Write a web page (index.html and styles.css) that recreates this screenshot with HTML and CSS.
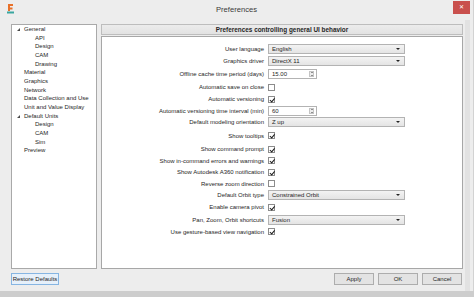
FILE: index.html
```html
<!DOCTYPE html>
<html lang="en">
<head>
  <meta charset="UTF-8" />
  <meta name="viewport" content="width=device-width, initial-scale=1.0"/>
  <title>Preferences</title>
  <link rel="stylesheet" href="styles.css">
</head>
<body>
  <div class="window">
    <div class="titlebar">
      <svg class="app-icon" width="9" height="11" viewBox="0 0 9 11">
        <path d="M2 1 H7 V3 H4 V4.5 H6.5 V6.5 H4 V8 H2 Z" fill="#e8712a"/>
        <path d="M1 8.5 H8 V10.5 H1 Z" fill="#3aa6a0"/>
      </svg>
      <span class="title">Preferences</span>
      <span class="close">&#x2715;</span>
    </div>

    <div class="client">
      <div class="main">
        <ul class="tree">
          <li class="open"><span class="arrow"></span>General</li>
          <li class="child">API</li>
          <li class="child">Design</li>
          <li class="child">CAM</li>
          <li class="child">Drawing</li>
          <li>Material</li>
          <li>Graphics</li>
          <li>Network</li>
          <li>Data Collection and Use</li>
          <li>Unit and Value Display</li>
          <li class="open"><span class="arrow"></span>Default Units</li>
          <li class="child">Design</li>
          <li class="child">CAM</li>
          <li class="child">Sim</li>
          <li>Preview</li>
        </ul>

        <div class="page">
          <div class="page-head">Preferences controlling general UI behavior</div>
          <div class="page-body">
            <div class="form">
              <label>User language</label>
              <span class="combo">English</span>

              <label>Graphics driver</label>
              <span class="combo">DirectX 11</span>

              <label>Offline cache time period (days)</label>
              <span class="spin">15.00<span class="spin-btn"></span></span>

              <label>Automatic save on close</label>
              <span class="check"></span>

              <label>Automatic versioning</label>
              <span class="check on"></span>

              <label>Automatic versioning time interval (min)</label>
              <span class="spin">60<span class="spin-btn"></span></span>

              <label>Default modeling orientation</label>
              <span class="combo">Z up</span>

              <label>Show tooltips</label>
              <span class="check on"></span>

              <label>Show command prompt</label>
              <span class="check on"></span>

              <label>Show in-command errors and warnings</label>
              <span class="check on"></span>

              <label>Show Autodesk A360 notification</label>
              <span class="check on"></span>

              <label>Reverse zoom direction</label>
              <span class="check"></span>

              <label>Default Orbit type</label>
              <span class="combo">Constrained Orbit</span>

              <label>Enable camera pivot</label>
              <span class="check on"></span>

              <label>Pan, Zoom, Orbit shortcuts</label>
              <span class="combo">Fusion</span>

              <label>Use gesture-based view navigation</label>
              <span class="check on"></span>
            </div>
          </div>
        </div>
      </div>

      <div class="footer">
        <button class="restore">Restore Defaults</button>
        <div class="actions">
          <button>Apply</button>
          <button>OK</button>
          <button>Cancel</button>
        </div>
      </div>
    </div>
  </div>
</body>
</html>
```

FILE: styles.css
```css
html, body {
  margin: 0;
  padding: 0;
  height: 100%;
  background-color: #cdcdcd;
  font-family: "Liberation Sans", Arial, sans-serif;
  font-size: 6px;
  color: #262626;
  overflow: hidden;
}

.window {
  width: 474px;
  height: 291px;
  box-sizing: border-box;
  background-color: #ededed;
  border-right: 1px solid #d2d2d2;
}

.titlebar {
  position: relative;
  height: 20px;
  display: flex;
  align-items: center;
  justify-content: center;
}

.app-icon {
  position: absolute;
  left: 6px;
  top: 3px;
}

.title {
  font-size: 7.6px;
  color: #3a3a3a;
  margin-top: -2px;
}

.close {
  position: absolute;
  right: 3px;
  top: 1px;
  width: 17px;
  height: 13px;
  background-color: #c9504d;
  color: white;
  font-size: 6px;
  line-height: 13px;
  text-align: center;
}

.client {
  padding: 4px 10px 0 11px;
  background: linear-gradient(to left, #ededed 3px, #e2e2e2 3px, #e2e2e2 8px, #ededed 8px);
}

.main {
  display: flex;
  gap: 4px;
  height: 245px;
}

.tree {
  list-style: none;
  margin: 0;
  padding: 0;
  width: 86px;
  box-sizing: border-box;
  background-color: white;
  border: 1px solid #a9a9a9;
}

.tree li {
  line-height: 8.67px;
  height: 8.67px;
  padding-left: 12px;
  white-space: nowrap;
}

.tree li.child {
  padding-left: 23px;
}

.tree li.open {
  position: relative;
}

.arrow {
  position: absolute;
  left: 5px;
  top: 3px;
  width: 0;
  height: 0;
  border-left: 3px solid transparent;
  border-bottom: 3px solid #4a4a4a;
}

.page {
  flex: 1;
  display: flex;
  flex-direction: column;
}

.page-head {
  height: 9px;
  line-height: 9px;
  border: 1px solid #bdbdbd;
  background: linear-gradient(#ececec, #e2e2e2);
  text-align: center;
  font-size: 6.4px;
  font-weight: bold;
  margin-bottom: 1px;
}

.page-body {
  flex: 1;
  background-color: white;
  border: 1px solid #a7a7a7;
  padding-top: 6px;
}

.form {
  display: grid;
  grid-template-columns: 162px 1fr;
  grid-template-rows: 12px 12px 14px 12px 12px 11px 12px 15px 12px 11px 12px 11px 12px 12px 13px 11px;
  column-gap: 4px;
}

.form label {
  text-align: right;
  align-self: center;
  white-space: nowrap;
}

.combo {
  position: relative;
  align-self: center;
  width: 137px;
  height: 10px;
  box-sizing: border-box;
  border: 1px solid #b3b3b3;
  background: linear-gradient(#f3f3f3, #e4e4e4);
  padding-left: 3px;
  line-height: 8px;
}

.combo::after {
  content: "";
  position: absolute;
  right: 4px;
  top: 3px;
  border-left: 2px solid transparent;
  border-right: 2px solid transparent;
  border-top: 2px solid #222;
}

.spin {
  position: relative;
  align-self: center;
  width: 49px;
  height: 10px;
  box-sizing: border-box;
  border: 1px solid #b3b3b3;
  background-color: white;
  padding-left: 3px;
  line-height: 8px;
}

.spin-btn {
  position: absolute;
  right: 2px;
  top: 1px;
  width: 5px;
  height: 6px;
  box-sizing: border-box;
  border: 1px solid #c4c4c4;
  background-color: #ececec;
}

.spin-btn::before,
.spin-btn::after {
  content: "";
  position: absolute;
  left: 0.5px;
  border-left: 1.5px solid transparent;
  border-right: 1.5px solid transparent;
}

.spin-btn::before {
  top: 0;
  border-bottom: 1.5px solid #333;
}

.spin-btn::after {
  bottom: 0;
  border-top: 1.5px solid #333;
}

.check {
  position: relative;
  align-self: center;
  width: 7px;
  height: 7px;
  box-sizing: border-box;
  border: 1px solid #8c8c8c;
  background-color: white;
}

.check.on::after {
  content: "";
  position: absolute;
  left: 1.5px;
  top: 0;
  width: 1.5px;
  height: 3.5px;
  border-right: 1.2px solid #1a1a1a;
  border-bottom: 1.2px solid #1a1a1a;
  transform: rotate(40deg);
}

.footer {
  display: flex;
  justify-content: space-between;
  margin-top: 4px;
  padding-right: 1px;
  padding-bottom: 6px;
}

.actions {
  display: flex;
  gap: 4px;
}

button {
  font-family: inherit;
  font-size: 6px;
  color: #262626;
  height: 12px;
  width: 40px;
  padding: 0;
  border: 1px solid #adadad;
  background-color: #e3e3e3;
}

button.restore {
  width: 48px;
  border-color: #86b5e2;
  background-color: #e6f0fa;
}
```
